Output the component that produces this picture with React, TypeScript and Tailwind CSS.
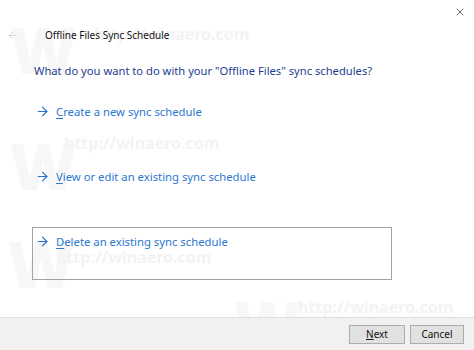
import { ArrowLeft, ArrowRight, X } from 'lucide-react'

const OPTIONS = [
  { key: 'C', rest: 'reate a new sync schedule', selected: false },
  { key: 'V', rest: 'iew or edit an existing sync schedule', selected: false },
  { key: 'D', rest: 'elete an existing sync schedule', selected: true },
]

// faint site watermarks that sit behind the dialog content
const MARKS = [
  { pos: 'left-[94px] top-[26px]' },
  { pos: 'left-[64px] top-[135px]' },
  { pos: 'left-[56px] top-[249px]' },
  { pos: 'left-[298px] top-[299px]' },
]

const WS = ['left-[10px] top-[18px]', 'left-[10px] top-[134px]', 'left-[8px] top-[232px]', 'left-[234px] top-[292px]']

export default function App() {
  return (
    <div className="relative flex h-[350px] w-[474px] flex-col overflow-hidden bg-white font-['Noto_Sans','Open_Sans',sans-serif]">
      {WS.map((p) => (
        <div key={p} className={`pointer-events-none absolute select-none text-[64px] font-black leading-none text-[#f7f7f7] ${p}`}>
          W
        </div>
      ))}
      {MARKS.map((m) => (
        <div key={m.pos} className={`pointer-events-none absolute select-none text-[16px] font-bold leading-none text-[#f3f3f3] ${m.pos}`}>
          http://winaero.com
        </div>
      ))}

      <div className="relative flex-1">
        {/* Close */}
        <div className="flex justify-end pr-[8px] pt-[6px]">
          <X size={12} strokeWidth={1.5} className="text-[#333]" />
        </div>

        {/* Title */}
        <div className="mt-[10px] flex items-center">
          <ArrowLeft size={11} strokeWidth={1.2} className="ml-[7px] text-[#b5b5b5]" />
          <span className="ml-[27px] text-[10px] text-[#111]">Offline Files Sync Schedule</span>
        </div>

        {/* Heading */}
        <div className="ml-[34px] mt-[20px] text-[11.2px] leading-[16px] text-[#1e3d8f]">
          What do you want to do with your "Offline Files" sync schedules?
        </div>

        {/* Options */}
        <div className="ml-[32px] mt-[18px] flex w-[360px] flex-col gap-[12px]">
          {OPTIONS.map((o) => (
            <div
              key={o.key}
              className={`flex h-[53px] items-start border pt-[6px] ${
                o.selected ? 'border-[#a3a3a3]' : 'border-transparent'
              }`}
            >
              <ArrowRight size={15} strokeWidth={1.8} className="ml-[2px] text-[#2a6fc9]" />
              <span className="ml-[6px] text-[11.3px] leading-[16px] text-[#2b78d0]">
                <span className="underline underline-offset-2">{o.key}</span>
                {o.rest}
              </span>
            </div>
          ))}
        </div>
      </div>

      {/* Footer */}
      <div className="relative flex h-[33px] items-center justify-end gap-[5px] border-t border-[#dfdfdf] bg-[#f0f0f0]/90 pr-[10px]">
        <button className="h-[19px] w-[56px] border border-[#adadad] bg-[#e1e1e1] text-[10px] leading-none text-[#111]">
          <span className="underline">N</span>ext
        </button>
        <button className="h-[19px] w-[54px] border border-[#adadad] bg-[#e1e1e1] text-[10px] leading-none text-[#111]">
          Cancel
        </button>
      </div>
    </div>
  )
}
